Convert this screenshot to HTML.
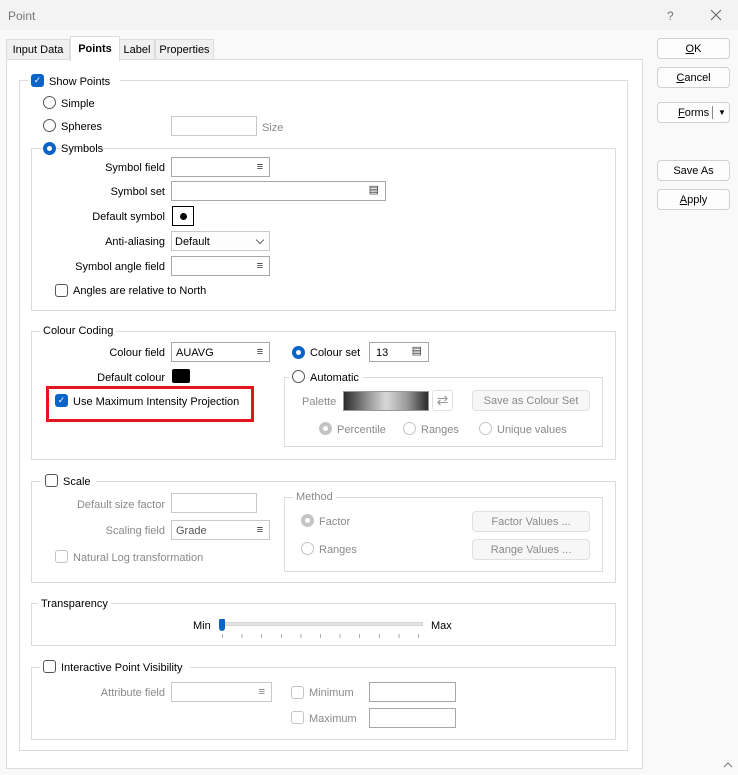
<!DOCTYPE html>
<html><head><meta charset="utf-8"><style>
*{box-sizing:border-box;margin:0;padding:0}
body{width:738px;height:775px;background:#f9f9f9;font-family:"Liberation Sans",sans-serif;font-size:11px;color:#000;position:relative;overflow:hidden}
div,span{position:absolute}
.t{line-height:14px;white-space:nowrap;margin-top:1px}
.r{text-align:right}
.g{color:#8a8a8a}
.grp{border:1px solid #dcdcdc}
.gt{background:#fff;padding:0 3px;line-height:14px;white-space:nowrap}
.in{background:#fff;border:1px solid #a8a8a8;height:20px}
.ing{background:#fff;border:1px solid #c8c8c8;height:20px}
.lst{position:absolute;right:6px;top:2px;font-size:11px;line-height:14px;color:#333}
.cb{width:13px;height:13px;border:1px solid #555;border-radius:3px;background:#fff}
.cbg{width:13px;height:13px;border:1px solid #c4c4c4;border-radius:3px;background:#fff}
.cbc{width:13px;height:13px;border-radius:3px;background:#0a64c8;color:#fff;font-size:9px;line-height:13px;text-align:center}
.rd{width:13px;height:13px;border:1px solid #555;border-radius:50%;background:#fff}
.rdg{width:13px;height:13px;border:1px solid #c4c4c4;border-radius:50%;background:#fff}
.rds{width:13px;height:13px;border-radius:50%;background:#0a64c8}
.rds::after{content:"";position:absolute;left:4px;top:4px;width:5px;height:5px;border-radius:50%;background:#fff}
.rdgs{width:13px;height:13px;border-radius:50%;background:#c4c4c4}
.rdgs::after{content:"";position:absolute;left:4px;top:4px;width:5px;height:5px;border-radius:50%;background:#fff}
.btn{border:1px solid #d0d0d0;border-radius:4px;background:#fdfdfd;text-align:center;line-height:20px;height:21px}
.btng{border:1px solid #e0e0e0;border-radius:4px;background:#f7f7f7;text-align:center;line-height:20px;color:#8a8a8a;height:21px}
.tab{background:#f0f0f0;border:1px solid #dcdcdc;border-bottom:none;line-height:21px;text-align:center;height:21px}
.u{text-decoration:underline}
</style></head><body>
<div style="left:0;top:0;width:738px;height:30px;background:#f3f3f3"></div>
<div class="t" style="left:8px;top:8px;font-size:12px;color:#777">Point</div>
<div class="t" style="left:667px;top:8px;font-size:12px;color:#777">?</div>
<svg style="position:absolute;left:710px;top:9px" width="12" height="12"><path d="M1 1L11 11M11 1L1 11" stroke="#666" stroke-width="1.1"/></svg>

<div class="tab" style="left:6px;top:39px;width:64px">Input Data</div>
<div class="tab" style="left:119px;top:39px;width:36px">Label</div>
<div class="tab" style="left:155px;top:39px;width:59px">Properties</div>
<div style="left:6px;top:59px;width:637px;height:710px;background:#fff;border:1px solid #dcdcdc"></div>
<div style="left:70px;top:36px;width:50px;height:25px;background:#fff;border:1px solid #dcdcdc;border-bottom:none;font-weight:bold;text-align:center;line-height:25px">Points</div>

<div class="btn" style="left:657px;top:38px;width:73px"><span class="u" style="position:static">O</span>K</div>
<div class="btn" style="left:657px;top:67px;width:73px"><span class="u" style="position:static">C</span>ancel</div>
<div class="btn" style="left:657px;top:102px;width:73px"><span style="left:20px;top:0"><span class="u" style="position:static">F</span>orms</span><span style="left:54px;top:3px;width:1px;height:13px;background:#888"></span><span style="left:60px;top:0;font-size:8px">▼</span></div>
<div class="btn" style="left:657px;top:160px;width:73px">Save As</div>
<div class="btn" style="left:657px;top:189px;width:73px"><span class="u" style="position:static">A</span>pply</div>

<div class="grp" style="left:19px;top:80px;width:609px;height:671px"></div>
<div class="gt" style="left:28px;top:74px;width:92px;height:14px"></div>
<div class="cbc" style="left:31px;top:74px">✓</div>
<div class="t" style="left:49px;top:74px">Show Points</div>

<div class="rd" style="left:43px;top:96px"></div><div class="t" style="left:61px;top:96px">Simple</div>
<div class="rd" style="left:43px;top:119px"></div><div class="t" style="left:61px;top:119px">Spheres</div>
<div class="ing" style="left:171px;top:116px;width:86px"></div><div class="t g" style="left:262px;top:120px">Size</div>

<div class="grp" style="left:31px;top:148px;width:585px;height:163px"></div>
<div class="gt" style="left:40px;top:141px;width:63px"></div>
<div class="rds" style="left:43px;top:142px"></div><div class="t" style="left:61px;top:141px">Symbols</div>

<div class="t r" style="left:40px;width:125px;top:160px">Symbol field</div>
<div class="in" style="left:171px;top:157px;width:99px"><span class="lst">≡</span></div>
<div class="t r" style="left:40px;width:125px;top:184px">Symbol set</div>
<div class="in" style="left:171px;top:181px;width:215px"><span class="lst" style="top:1px">▤</span></div>
<div class="t r" style="left:40px;width:125px;top:209px">Default symbol</div>
<div style="left:172px;top:206px;width:22px;height:20px;border:1px solid #000;background:#fff"><span style="left:7px;top:6px;width:7px;height:7px;border-radius:50%;background:#000"></span></div>
<div class="t r" style="left:40px;width:125px;top:234px">Anti-aliasing</div>
<div class="ing" style="left:171px;top:231px;width:99px;background:#fdfdfd"><span class="t" style="left:3px;top:2px">Default</span><span style="left:85px;top:5px;width:6px;height:6px;border-right:1px solid #666;border-bottom:1px solid #666;transform:rotate(45deg)"></span></div>
<div class="t r" style="left:40px;width:125px;top:259px">Symbol angle field</div>
<div class="in" style="left:171px;top:256px;width:99px"><span class="lst">≡</span></div>
<div class="cb" style="left:55px;top:284px"></div><div class="t" style="left:73px;top:283px">Angles are relative to North</div>

<div class="grp" style="left:31px;top:331px;width:585px;height:129px"></div>
<div class="gt" style="left:40px;top:324px">Colour Coding</div>
<div class="t r" style="left:40px;width:125px;top:345px">Colour field</div>
<div class="in" style="left:171px;top:342px;width:99px"><span class="t" style="left:4px;top:2px">AUAVG</span><span class="lst">≡</span></div>
<div class="rds" style="left:292px;top:346px"></div><div class="t" style="left:310px;top:345px">Colour set</div>
<div class="in" style="left:369px;top:342px;width:60px"><span class="t" style="left:6px;top:2px">13</span><span class="lst" style="top:1px">▤</span></div>
<div class="t r" style="left:40px;width:125px;top:370px">Default colour</div>
<div style="left:172px;top:369px;width:18px;height:14px;background:#000;border-radius:2px"></div>

<div class="grp" style="left:284px;top:377px;width:319px;height:70px"></div>
<div class="gt" style="left:289px;top:370px;width:74px;height:14px"></div>
<div class="rd" style="left:292px;top:370px"></div><div class="t" style="left:310px;top:370px">Automatic</div>
<div class="t g" style="left:302px;top:394px">Palette</div>
<div style="left:343px;top:391px;width:86px;height:20px;border:1px solid #999;background:linear-gradient(to right,#2a2a2a,#9a9a9a 30%,#d8d8d8 50%,#9a9a9a 75%,#2a2a2a)"></div>
<div style="left:432px;top:390px;width:21px;height:21px;border:1px solid #e0e0e0;border-radius:3px;color:#999;font-size:14px;text-align:center;line-height:19px">⇄</div>
<div class="btng" style="left:472px;top:390px;width:118px">Save as Colour Set</div>
<div class="rdgs" style="left:319px;top:422px"></div><div class="t g" style="left:337px;top:422px">Percentile</div>
<div class="rdg" style="left:403px;top:422px"></div><div class="t g" style="left:421px;top:422px">Ranges</div>
<div class="rdg" style="left:479px;top:422px"></div><div class="t g" style="left:497px;top:422px">Unique values</div>

<div style="left:46px;top:386px;width:208px;height:36px;border:3px solid #e5141c"></div>
<div class="cbc" style="left:55px;top:394px">✓</div><div class="t" style="left:73px;top:394px">Use Maximum Intensity Projection</div>

<div class="grp" style="left:31px;top:481px;width:585px;height:102px"></div>
<div class="gt" style="left:40px;top:474px;width:56px;height:14px"></div>
<div class="cb" style="left:45px;top:474px"></div><div class="t" style="left:63px;top:474px">Scale</div>
<div class="t r g" style="left:40px;width:125px;top:497px">Default size factor</div>
<div class="ing" style="left:171px;top:493px;width:86px"></div>
<div class="t r g" style="left:40px;width:125px;top:523px">Scaling field</div>
<div class="ing" style="left:171px;top:520px;width:99px"><span class="t" style="left:4px;top:2px;color:#555">Grade</span><span class="lst">≡</span></div>
<div class="cbg" style="left:55px;top:550px"></div><div class="t g" style="left:73px;top:550px">Natural Log transformation</div>

<div class="grp" style="left:284px;top:497px;width:319px;height:75px"></div>
<div class="gt g" style="left:293px;top:490px">Method</div>
<div class="rdgs" style="left:301px;top:514px"></div><div class="t g" style="left:319px;top:514px">Factor</div>
<div class="btng" style="left:472px;top:511px;width:118px">Factor Values ...</div>
<div class="rdg" style="left:301px;top:542px"></div><div class="t g" style="left:319px;top:542px">Ranges</div>
<div class="btng" style="left:472px;top:539px;width:118px">Range Values ...</div>

<div class="grp" style="left:31px;top:603px;width:585px;height:43px"></div>
<div class="gt" style="left:38px;top:597px">Transparency</div>
<div class="t" style="left:193px;top:618px">Min</div>
<div style="left:222px;top:622px;width:201px;height:4px;background:#e4e4e4;border:1px solid #d4d4d4"></div>
<div style="left:219px;top:619px;width:6px;height:12px;background:#0a64c8;border-radius:1px 1px 3px 3px"></div>
<div class="t" style="left:431px;top:618px">Max</div>
<div style="left:222px;top:634px;width:200px;height:4px;background:repeating-linear-gradient(to right,#aaa 0 1px,transparent 1px 19.6px)"></div>

<div class="grp" style="left:31px;top:667px;width:585px;height:73px"></div>
<div class="gt" style="left:40px;top:660px;width:150px;height:14px"></div>
<div class="cb" style="left:43px;top:660px"></div><div class="t" style="left:61px;top:660px">Interactive Point Visibility</div>
<div class="t r g" style="left:40px;width:125px;top:685px">Attribute field</div>
<div class="ing" style="left:171px;top:682px;width:101px"><span class="lst" style="color:#777">≡</span></div>
<div class="cbg" style="left:291px;top:686px"></div><div class="t g" style="left:309px;top:685px">Minimum</div>
<div class="in" style="left:369px;top:682px;width:87px"></div>
<div class="cbg" style="left:291px;top:711px"></div><div class="t g" style="left:309px;top:711px">Maximum</div>
<div class="in" style="left:369px;top:708px;width:87px"></div>

<svg style="position:absolute;left:723px;top:761px" width="10" height="7"><path d="M1 6L5 2L9 6" stroke="#777" fill="none"/></svg>
</body></html>
